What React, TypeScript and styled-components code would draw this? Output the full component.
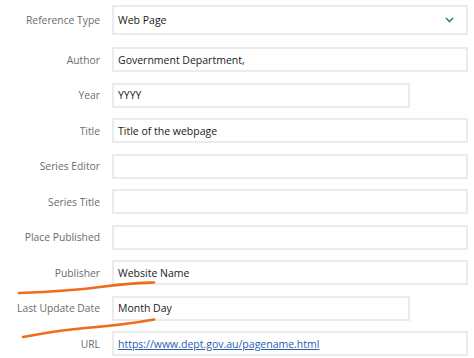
import { FC } from "react";
import styled, { createGlobalStyle } from "styled-components";

const GlobalStyle = createGlobalStyle`
  html, body {
    margin: 0;
    padding: 0;
    background: #ffffff;
  }
  body {
    font-family: "Open Sans", "Noto Sans", sans-serif;
  }
`;

const Page = styled.div`
  position: relative;
  width: 474px;
  height: 358px;
  overflow: hidden;
  background: #ffffff;
`;

const Form = styled.form`
  display: flex;
  flex-direction: column;
  gap: 10.5px;
  padding-top: 5px;
`;

const Row = styled.div<{ $tall?: boolean }>`
  display: grid;
  grid-template-columns: 100px 1fr;
  column-gap: 12px;
  align-items: center;
  height: ${(p) => (p.$tall ? "30px" : "25px")};
  margin-bottom: ${(p) => (p.$tall ? "1.5px" : "0")};
`;

const Label = styled.label`
  text-align: right;
  font-size: 10.3px;
  color: #6b6b6b;
  white-space: nowrap;
`;

const Field = styled.div<{ $short?: boolean; $tall?: boolean }>`
  box-sizing: border-box;
  width: ${(p) => (p.$short ? "298px" : "356px")};
  height: ${(p) => (p.$tall ? "30px" : "25px")};
  border: 2px solid #ebebeb;
  display: flex;
  align-items: center;
  justify-content: space-between;
  padding: 0 12px 0 4px;
  font-size: 10.5px;
  color: #1a1a1a;
`;

const Link = styled.a`
  color: #2a5db0;
  text-decoration: underline;
`;

const Chevron = styled.svg`
  width: 9px;
  height: 6px;
`;

const Marks = styled.svg`
  position: absolute;
  left: 0;
  top: 0;
  pointer-events: none;
`;

type Item = { label: string; value?: string; short?: boolean; link?: boolean };

const items: Item[] = [
  { label: "Author", value: "Government Department," },
  { label: "Year", value: "YYYY", short: true },
  { label: "Title", value: "Title of the webpage" },
  { label: "Series Editor" },
  { label: "Series Title" },
  { label: "Place Published" },
  { label: "Publisher", value: "Website Name" },
  { label: "Last Update Date", value: "Month Day", short: true },
  { label: "URL", value: "https://www.dept.gov.au/pagename.html", link: true },
];

const App: FC = () => {
  return (
    <Page>
      <GlobalStyle />
      <Form>
        <Row $tall>
          <Label>Reference Type</Label>
          <Field $tall>
            <span>Web Page</span>
            <Chevron viewBox="0 0 9 6">
              <path d="M1 1 L4.5 4.5 L8 1" fill="none" stroke="#2b8a78" strokeWidth="1.6" />
            </Chevron>
          </Field>
        </Row>
        {items.map((it) => (
          <Row key={it.label}>
            <Label>{it.label}</Label>
            <Field $short={it.short}>
              {it.link ? <Link href="#">{it.value}</Link> : <span>{it.value}</span>}
            </Field>
          </Row>
        ))}
      </Form>
      <Marks width="474" height="358" viewBox="0 0 474 358">
        <path
          d="M19 293 C45 292, 70 291, 100 287 S140 283, 154 282.5"
          fill="none"
          stroke="#ef6c1c"
          strokeWidth="2.6"
          strokeLinecap="round"
        />
        <path
          d="M23 337 C40 334, 60 330, 85 328 S135 323, 154 319.5"
          fill="none"
          stroke="#ef6c1c"
          strokeWidth="2.6"
          strokeLinecap="round"
        />
      </Marks>
    </Page>
  );
};

export default App;
